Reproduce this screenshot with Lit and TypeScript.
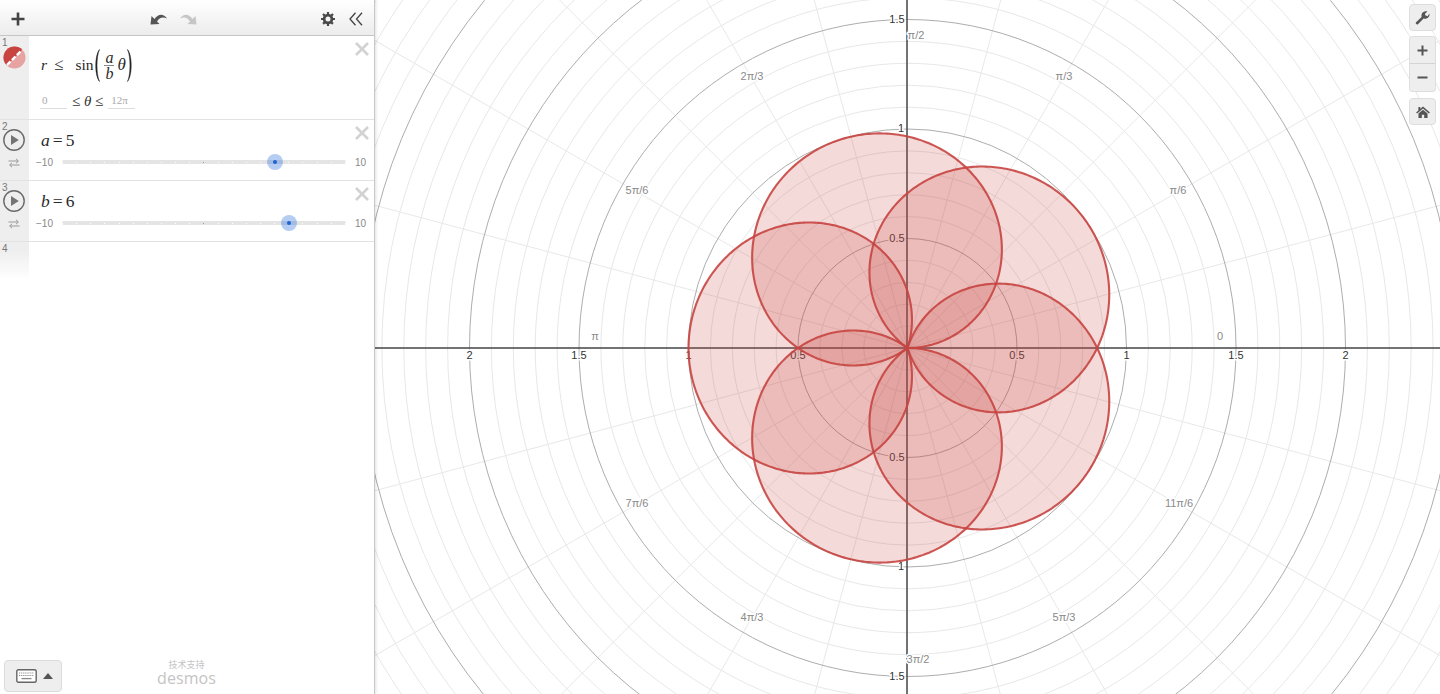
import { LitElement, html, css, svg } from 'lit'
import { customElement } from 'lit/decorators.js'

// graph constants, read off the reference
const CX = 532.5 // 907.5 - panel width
const CY = 348
const UNIT = 219
const W = 1065
const H = 694
const RED = '#c74440'

const lobePath = (start: number) => {
  const pts: string[] = []
  const span = (6 * Math.PI) / 5
  for (let i = 0; i <= 360; i++) {
    const t = (span * i) / 360
    const r = Math.sin((5 / 6) * t) * UNIT
    const a = start + t
    pts.push(`${(CX + r * Math.cos(a)).toFixed(2)},${(CY - r * Math.sin(a)).toFixed(2)}`)
  }
  return `M${pts.join('L')}Z`
}

const angleLabels: [string, number, number][] = [
  ['π/2', 916, 35],
  ['π/3', 1064, 76],
  ['π/6', 1178, 190],
  ['0', 1220, 336],
  ['2π/3', 752, 76],
  ['5π/6', 637, 190],
  ['π', 595, 336],
  ['7π/6', 637, 503],
  ['4π/3', 752, 617],
  ['3π/2', 918, 659],
  ['5π/3', 1064, 617],
  ['11π/6', 1179, 503],
]

@customElement('polar-graph')
class PolarGraph extends LitElement {
  static styles = css`
    :host {
      display: block;
      position: absolute;
      inset: 0;
    }
    svg {
      display: block;
    }
    text {
      font-family: 'Liberation Sans', Arial, sans-serif;
      font-size: 11px;
      text-anchor: middle;
      dominant-baseline: central;
      paint-order: stroke;
      stroke: #fff;
      stroke-width: 3px;
      stroke-linejoin: round;
    }
    .num {
      fill: #333;
    }
    .ang {
      fill: #8a8a8a;
    }
  `

  render() {
    const minors = []
    const majors = []
    for (let i = 1; i <= 32; i++) {
      const r = i * 0.1 * UNIT
      if (i % 5 === 0) majors.push(svg`<circle cx=${CX} cy=${CY} r=${r} fill="none" stroke="#adadad" stroke-width="1"></circle>`)
      else minors.push(svg`<circle cx=${CX} cy=${CY} r=${r} fill="none" stroke="#e8e8e8" stroke-width="1"></circle>`)
    }
    const spokes = []
    for (let d = 15; d < 360; d += 15) {
      if (d % 180 === 0 || d === 90 || d === 270) continue
      const a = (d * Math.PI) / 180
      spokes.push(svg`<line x1=${CX} y1=${CY} x2=${CX + 1300 * Math.cos(a)} y2=${CY - 1300 * Math.sin(a)} stroke="#e8e8e8" stroke-width="1"></line>`)
    }
    const lobes = [0, 1, 2, 3, 4].map((k) => lobePath((k * 2 * Math.PI) / 5))

    const xNums = [
      ['2', -2], ['1.5', -1.5], ['1', -1], ['0.5', -0.5],
      ['0.5', 0.5], ['1', 1], ['1.5', 1.5], ['2', 2],
    ] as [string, number][]
    const yNums = [
      ['1.5', 1.5], ['1', 1], ['0.5', 0.5],
      ['0.5', -0.5], ['1', -1], ['1.5', -1.5],
    ] as [string, number][]

    return html`
      <svg width=${W} height=${H} viewBox="0 0 ${W} ${H}">
        ${minors}${spokes}${majors}
        <line x1="0" y1=${CY} x2=${W} y2=${CY} stroke="#444" stroke-width="1.5"></line>
        <line x1=${CX - 0.5} y1="0" x2=${CX - 0.5} y2=${H} stroke="#444" stroke-width="1.5"></line>
        ${angleLabels.map(([t, x, y]) => svg`<text class="ang" x=${x - 375} y=${y}>${t}</text>`)}
        ${xNums.map(([t, v]) => svg`<text class="num" x=${CX + v * UNIT} y=${CY + 6.5}>${t}</text>`)}
        ${yNums.map(([t, v]) => svg`<text class="num" x=${CX - (t.length > 1 ? 10.5 : 6.5)} y=${CY - v * UNIT - 1}>${t}</text>`)}
        ${lobes.map((d) => svg`<path d=${d} fill=${RED} fill-opacity="0.2" stroke="none"></path>`)}
        ${lobes.map((d) => svg`<path d=${d} fill="none" stroke=${RED} stroke-opacity="0.9" stroke-width="2.1" stroke-linejoin="round"></path>`)}
      </svg>
    `
  }
}

const closeIcon = html`<svg class="close" width="14" height="14" viewBox="0 0 14 14"><path d="M1 1L13 13M13 1L1 13" stroke="#d2d2d2" stroke-width="2.6" fill="none"></path></svg>`

const playIcon = html`<svg width="24" height="24" viewBox="0 0 24 24">
  <circle cx="12" cy="12" r="10.2" fill="none" stroke="#6a6a6a" stroke-width="1.4"></circle>
  <path d="M9 7L16.8 12L9 17Z" fill="#747474"></path>
</svg>`

const loopIcon = html`<svg width="12" height="10" viewBox="0 0 12 10">
  <path d="M.5 3H10M8 .8L10.4 3L8 5.2M11.5 7H2M4 4.8L1.6 7L4 9.2" fill="none" stroke="#999" stroke-width="1"></path>
</svg>`

const undoPath = 'M.5 11.5L1.5 3L4.5 6C7.5 1.5 13 -.5 17 5.5C13 3.5 9.5 4 7 8.5L9.5 11Z'

const ticks = Array.from({ length: 21 }, (_, i) => i)

@customElement('app-root')
class AppRoot extends LitElement {
  static styles = css`
    :host {
      display: block;
      position: relative;
      width: 1440px;
      height: 694px;
      overflow: hidden;
      background: #fff;
      font-family: 'Liberation Sans', Arial, sans-serif;
    }
    .app {
      display: flex;
      height: 100%;
    }
    .panel {
      position: relative;
      z-index: 2;
      display: flex;
      flex-direction: column;
      width: 375px;
      flex: none;
      background: #fff;
      border-right: 1px solid #c8c8c8;
      box-sizing: border-box;
      box-shadow: 1px 0 3px rgba(0, 0, 0, 0.12);
    }
    .graph {
      position: relative;
      flex: 1;
      overflow: hidden;
    }
    .header {
      display: flex;
      align-items: center;
      height: 36px;
      flex: none;
      box-sizing: border-box;
      padding: 2px 11px 0 11px;
      background: linear-gradient(#fff, #ececec);
      border-bottom: 1px solid #c6c6c6;
    }
    .hmid {
      display: flex;
      gap: 13px;
      margin-left: 125px;
    }
    .hmid svg:last-child {
      transform: scaleX(-1);
    }
    .hright {
      display: flex;
      align-items: center;
      gap: 14px;
      margin-left: auto;
    }
    .row {
      display: flex;
      position: relative;
      flex: none;
      border-bottom: 1px solid #e2e2e2;
    }
    .r1 {
      height: 83px;
    }
    .r2 {
      height: 60px;
    }
    .gutter {
      position: relative;
      display: flex;
      flex-direction: column;
      align-items: center;
      width: 29px;
      flex: none;
      background: #eeeeee;
      box-sizing: border-box;
    }
    .idx {
      position: absolute;
      left: 2px;
      top: 1px;
      font-size: 10px;
      color: #777;
    }
    .swatch {
      margin-top: 10px;
      margin-left: -1px;
    }
    .play {
      margin-top: 8px;
      margin-left: -2px;
      height: 24px;
    }
    .loop {
      margin-top: 6px;
      margin-left: -1px;
      height: 10px;
    }
    .play svg,
    .loop svg {
      display: block;
    }
    .close {
      position: absolute;
      right: 5px;
      top: 6px;
    }
    .body {
      flex: 1;
      min-width: 0;
      font-family: 'Liberation Serif', 'Times New Roman', serif;
      color: #2a2a2a;
    }
    .expr {
      display: flex;
      align-items: center;
      height: 24px;
      margin: 17px 0 0 12px;
      font-size: 15.5px;
    }
    .ital {
      font-style: italic;
    }
    .le {
      margin: 0 12px 0 7px;
      font-size: 17px;
    }
    .frac {
      display: flex;
      flex-direction: column;
      align-items: center;
      margin: 0 3px 0 4px;
      font-size: 16px;
      line-height: 15px;
      font-style: italic;
    }
    .frac i {
      width: 10px;
      height: 1px;
      background: #888;
      margin: 0;
    }
    .theta {
      font-size: 17px;
      margin-right: 1px;
    }
    .limits {
      display: flex;
      align-items: flex-end;
      margin: 17px 0 0 11px;
      font-size: 15px;
      color: #333;
    }
    .limit {
      width: 27px;
      height: 15px;
      border-bottom: 1px solid #dcdcdc;
      font-family: 'Liberation Serif', serif;
      font-size: 11px;
      line-height: 13px;
      color: #aaa;
      padding-left: 2px;
      box-sizing: border-box;
    }
    .limit.wide {
      margin-left: 5px;
      padding-left: 3px;
    }
    .bounds {
      margin-left: 5px;
      line-height: 15px;
    }
    .eq {
      display: flex;
      height: 22px;
      align-items: center;
      margin: 9px 0 0 12px;
      font-size: 17.5px;
    }
    .eq b {
      font-weight: normal;
      margin: 0 3px;
    }
    .slider {
      display: flex;
      align-items: center;
      height: 16px;
      margin: 3px 8px 0 7px;
      font-family: 'Liberation Sans', Arial, sans-serif;
      font-size: 10px;
      color: #888;
    }
    .min {
      width: 26px;
      flex: none;
    }
    .max {
      width: 20px;
      flex: none;
      text-align: right;
    }
    .track {
      position: relative;
      flex: 1;
      height: 4px;
      border-radius: 2px;
      background: #e4e4e4;
      display: flex;
      justify-content: space-between;
      align-items: center;
    }
    .track span {
      width: 1px;
      height: 1px;
      background: #fff;
    }
    .track span.zero {
      background: #999;
    }
    .thumb {
      position: absolute;
      top: -6px;
      width: 16px;
      height: 16px;
      margin-left: -8px;
      border-radius: 50%;
      background: rgba(45, 112, 220, 0.35);
    }
    .thumb::after {
      content: '';
      position: absolute;
      left: 6px;
      top: 6px;
      width: 4px;
      height: 4px;
      border-radius: 50%;
      background: #1f62d0;
    }
    .last {
      height: 38px;
      border-bottom: 0;
    }
    .last .gutter {
      background: linear-gradient(#eee 20%, #fff);
    }
    .foot {
      display: flex;
      align-items: flex-end;
      margin-top: auto;
      padding: 0 0 2px 4px;
    }
    .kbd {
      display: flex;
      align-items: center;
      gap: 6px;
      width: 58px;
      height: 32px;
      box-sizing: border-box;
      padding-left: 11px;
      background: #eeeeee;
      border: 1px solid #dcdcdc;
      border-radius: 4px;
    }
    .brand {
      display: flex;
      flex-direction: column;
      align-items: center;
      margin: 0 0 7px 95px;
      color: #c4c4c4;
    }
    .brand small {
      display: block;
      height: 10px;
      font-family: 'Noto Sans CJK SC', sans-serif;
      font-size: 9px;
      line-height: 10px;
    }
    .brand span {
      display: block;
      margin-top: 1px;
      font-family: 'Open Sans', 'Liberation Sans', sans-serif;
      font-size: 16px;
      line-height: 14px;
      letter-spacing: 0.1px;
    }
    .tools {
      position: absolute;
      right: 4px;
      top: 4px;
      display: flex;
      flex-direction: column;
      width: 27px;
    }
    .btn {
      display: flex;
      align-items: center;
      justify-content: center;
      height: 27px;
      box-sizing: border-box;
      background: #eeeeee;
      border: 1px solid #dedede;
      border-radius: 4px;
    }
    .zoom {
      margin-top: 5px;
    }
    .zoom .btn {
      height: 28px;
    }
    .zoom .btn:first-child {
      border-radius: 4px 4px 0 0;
      border-bottom: 1px solid #d4d4d4;
    }
    .zoom .btn:last-child {
      border-radius: 0 0 4px 4px;
      border-top: 0;
    }
    .home {
      margin-top: 6px;
    }
  `

  renderSlider(name: string, value: number) {
    const pct = ((value + 10) / 20) * 100
    return html`
      <div class="body">
        <div class="eq"><span class="ital">${name}</span><b>=</b><span>${value}</span></div>
        <div class="slider">
          <span class="min">−10</span>
          <div class="track">
            ${ticks.map((i) => html`<span class=${i === 10 ? 'zero' : ''}></span>`)}
            <div class="thumb" style="left:${pct}%"></div>
          </div>
          <span class="max">10</span>
        </div>
      </div>
    `
  }

  render() {
    return html`
      <div class="app">
        <div class="panel">
          <div class="header">
            <svg width="14" height="14" viewBox="0 0 14 14"><path d="M7 .5V13.5M.5 7H13.5" stroke="#444" stroke-width="2.6"></path></svg>
            <div class="hmid">
              <svg width="17" height="12" viewBox="0 0 17 12"><path d=${undoPath} fill="#555"></path></svg>
              <svg width="17" height="12" viewBox="0 0 17 12"><path d=${undoPath} fill="#c6c6c6"></path></svg>
            </div>
            <div class="hright">
              <svg width="14" height="14" viewBox="0 0 14 14">
                <circle cx="7" cy="7" r="3.9" fill="none" stroke="#4a4a4a" stroke-width="2.8"></circle>
                <path d="M7 0V14M0 7H14M2 2L12 12M12 2L2 12" stroke="#4a4a4a" stroke-width="2.2" stroke-dasharray="2.6 8.8 2.6 8.8"></path>
              </svg>
              <svg width="14" height="14" viewBox="0 0 14 14"><path d="M6.5.8L1 7L6.5 13.2M13 .8L7.5 7L13 13.2" fill="none" stroke="#444" stroke-width="1.3"></path></svg>
            </div>
          </div>

          <div class="row r1">
            <div class="gutter">
              <span class="idx">1</span>
              <svg class="swatch" width="23" height="23" viewBox="0 0 23 23">
                <circle cx="11.5" cy="11.5" r="11" fill="#e6a3a1"></circle>
                <path d="M3.7 19.3A11 11 0 0 1 19.3 3.7Z" fill="#c74440"></path>
                <path d="M4 19L19 4" stroke="#fff" stroke-width="2.4" stroke-dasharray="5 2"></path>
              </svg>
            </div>
            <div class="body">
              <div class="expr">
                <span class="ital">r</span>
                <span class="le">≤</span>
                <span>sin</span>
                <svg width="7" height="33" viewBox="0 0 7 33"><path d="M6.5 .5C1.5 6 1.5 27 6.5 32.5C3.2 26 3.2 7 6.5 .5Z" fill="#222" stroke="#222" stroke-width=".5"></path></svg>
                <div class="frac"><span>a</span><i></i><span>b</span></div>
                <span class="ital theta">θ</span>
                <svg width="7" height="33" viewBox="0 0 7 33"><path d="M.5 .5C5.5 6 5.5 27 .5 32.5C3.8 26 3.8 7 .5 .5Z" fill="#222" stroke="#222" stroke-width=".5"></path></svg>
              </div>
              <div class="limits">
                <div class="limit">0</div>
                <span class="bounds">≤ <span class="ital">θ</span> ≤</span>
                <div class="limit wide">12π</div>
              </div>
            </div>
            ${closeIcon}
          </div>

          <div class="row r2">
            <div class="gutter"><span class="idx">2</span><div class="play">${playIcon}</div><div class="loop">${loopIcon}</div></div>
            ${this.renderSlider('a', 5)}
            ${closeIcon}
          </div>

          <div class="row r2">
            <div class="gutter"><span class="idx">3</span><div class="play">${playIcon}</div><div class="loop">${loopIcon}</div></div>
            ${this.renderSlider('b', 6)}
            ${closeIcon}
          </div>

          <div class="row last">
            <div class="gutter"><span class="idx">4</span></div>
          </div>

          <div class="foot">
            <div class="kbd">
              <svg width="21" height="14" viewBox="0 0 21 14">
                <rect x=".8" y=".8" width="19.4" height="12.4" rx="1.5" fill="#fff" stroke="#666" stroke-width="1.4"></rect>
                <path d="M3 4H18M3 6.5H18" stroke="#888" stroke-width="1.2" stroke-dasharray="1.2 .9"></path>
                <path d="M5.5 9.6H15.5" stroke="#888" stroke-width="1.3"></path>
              </svg>
              <svg width="10" height="6" viewBox="0 0 10 6"><path d="M0 6L5 0L10 6Z" fill="#555"></path></svg>
            </div>
            <div class="brand"><small>技术支持</small><span>desmos</span></div>
          </div>
        </div>

        <div class="graph">
          <polar-graph></polar-graph>
          <div class="tools">
            <div class="btn">
              <svg width="15" height="15" viewBox="0 0 15 15"><path d="M.8 12.6L6.6 6.9C6 4.6 7 2 9.6 1.4C10.6 1.1 11.6 1.2 12.4 1.6L9.8 3.9L10.6 5.6L12.6 6.2L14.4 3.6C14.9 6.3 13.2 8.5 10.8 8.7C10 8.8 9.2 8.6 8.6 8.4L3 14.2C1.8 14.8.3 13.8.8 12.6Z" fill="#555"></path></svg>
            </div>
            <div class="zoom">
              <div class="btn"><svg width="11" height="11" viewBox="0 0 11 11"><path d="M5.5 .5V10.5M.5 5.5H10.5" stroke="#555" stroke-width="2"></path></svg></div>
              <div class="btn"><svg width="11" height="11" viewBox="0 0 11 11"><path d="M.5 5.5H10.5" stroke="#555" stroke-width="2"></path></svg></div>
            </div>
            <div class="btn home">
              <svg width="14" height="12" viewBox="0 0 15 13"><path d="M7.5 .5L15 7L13.8 8L7.5 2.6L1.2 8L0 7L2.5 4.8V1.2H4.5V3.1ZM2.6 8.2L7.5 4L12.4 8.2V13H8.8V9.6H6.2V13H2.6Z" fill="#555"></path></svg>
            </div>
          </div>
        </div>
      </div>
    `
  }
}
